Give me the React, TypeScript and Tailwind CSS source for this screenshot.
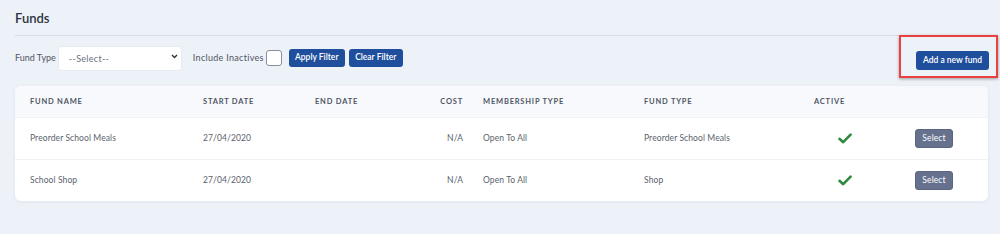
import React from 'react';

type Fund = {
  name: string;
  startDate: string;
  endDate: string;
  cost: string;
  membership: string;
  fundType: string;
  active: boolean;
};

const funds: Fund[] = [
  {
    name: 'Preorder School Meals',
    startDate: '27/04/2020',
    endDate: '',
    cost: 'N/A',
    membership: 'Open To All',
    fundType: 'Preorder School Meals',
    active: true,
  },
  {
    name: 'School Shop',
    startDate: '27/04/2020',
    endDate: '',
    cost: 'N/A',
    membership: 'Open To All',
    fundType: 'Shop',
    active: true,
  },
];

const cols = 'grid grid-cols-[173px_112px_85px_63px_181px_170px_91px_1fr] items-center pl-[15px]';

const Check: React.FC = () => (
  <svg width="14" height="11" viewBox="0 0 14 11" fill="none">
    <path d="M1.5 5.8 L5.2 9.2 L12.6 1.6" stroke="#2f8a3e" strokeWidth="2.6" strokeLinecap="round" strokeLinejoin="round" />
  </svg>
);

export default function App() {
  return (
    <div
      className="min-h-[234px] bg-[#edf1f8] pl-[15px] pr-[11px] pt-[10px] pb-[20px] text-[#555a66]"
      style={{ fontFamily: 'Lato, "Noto Sans", Arial, sans-serif' }}
    >
      <h1 className="text-[13px] leading-[16px] font-semibold text-[#2d3440]">Funds</h1>
      <div className="mt-[9px] border-t border-[#d5dce8]" />

      {/* filter bar */}
      <div className="mt-[9px] flex h-[25px] items-center justify-between">
        <div className="flex items-center">
          <label className="text-[9px] text-[#4f5563]">Fund Type</label>
          <div className="relative ml-[2px]">
            <select className="h-[25px] w-[124px] appearance-none rounded-[4px] border border-[#e6eaf1] bg-white pl-[10px] text-[9px] tracking-[0.3px] text-[#6b7080] outline-none">
              <option>--Select--</option>
            </select>
            <svg className="pointer-events-none absolute right-[4px] top-[10px]" width="7" height="5" viewBox="0 0 7 5">
              <path d="M1 1 L3.5 3.6 L6 1" stroke="#333" strokeWidth="1.4" fill="none" />
            </svg>
          </div>
          <label className="ml-[11px] flex items-center text-[9px] tracking-[0.3px] text-[#4f5563]">
            Include Inactives
            <span className="ml-[2px] inline-block h-[16px] w-[16px] rounded-[3px] border border-[#8a8f99] bg-white" />
          </label>
          <button className="ml-[7px] h-[18px] w-[56px] rounded-[3px] bg-[#1f4f9c] text-[8.5px] font-semibold text-white">
            Apply Filter
          </button>
          <button className="ml-[4px] h-[18px] w-[54px] rounded-[3px] bg-[#1f4f9c] text-[8.5px] font-semibold text-white">
            Clear Filter
          </button>
        </div>
        <div className="relative">
          <button className="h-[19px] w-[73px] rounded-[3px] bg-[#1f4f9c] text-[8.5px] font-semibold text-white">
            Add a new fund
          </button>
          <div className="pointer-events-none absolute -bottom-[8px] -left-[17px] -right-[9px] -top-[10px] border-2 border-[#e8413f] shadow-[0_1px_3px_rgba(0,0,0,0.35)]" />
        </div>
      </div>

      {/* table card */}
      <div className="mt-[16px] mr-[1px] overflow-hidden rounded-[6px] bg-white shadow-[0_1px_4px_rgba(30,50,90,0.06)]">
        <div className={`${cols} h-[31px] bg-[#f8f9fc] text-[7.5px] font-bold uppercase tracking-[0.8px] text-[#4e5565]`}>
          <div>Fund Name</div>
          <div>Start Date</div>
          <div>End Date</div>
          <div className="text-right">Cost</div>
          <div className="pl-[20px]">Membership Type</div>
          <div>Fund Type</div>
          <div>Active</div>
          <div />
        </div>
        {funds.map((f) => (
          <div key={f.name} className={`${cols} h-[42px] border-t border-[#eef1f5] text-[8.5px] tracking-[0.1px] text-[#5a5f6d]`}>
            <div>{f.name}</div>
            <div>{f.startDate}</div>
            <div>{f.endDate}</div>
            <div className="text-right">{f.cost}</div>
            <div className="pl-[20px]">{f.membership}</div>
            <div>{f.fundType}</div>
            <div className="flex pl-[24px]">{f.active && <Check />}</div>
            <div className="pl-[10px]">
              <button className="h-[19px] w-[38px] rounded-[3px] border border-[#5a6580] bg-[#66718e] text-[8.5px] text-white">
                Select
              </button>
            </div>
          </div>
        ))}
      </div>
    </div>
  );
}
